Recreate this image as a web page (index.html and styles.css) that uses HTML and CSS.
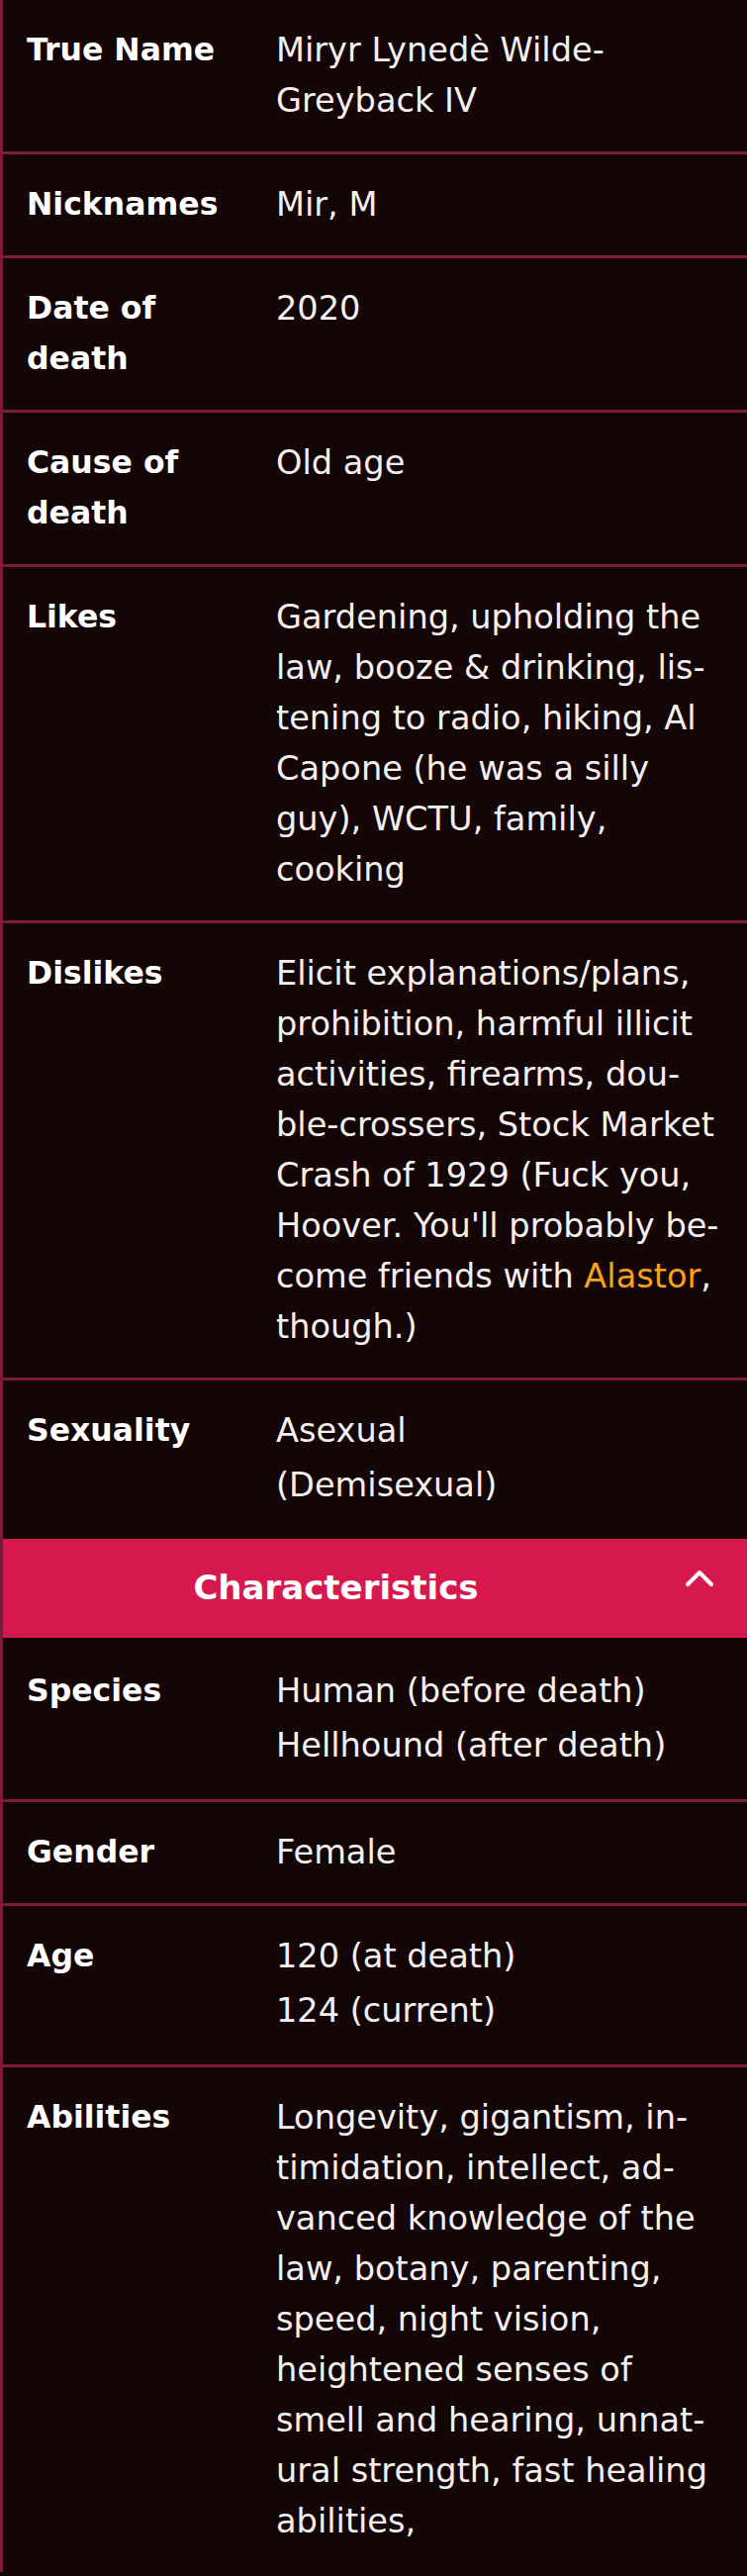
FILE: index.html
```html
<!DOCTYPE html>
<html lang="en">
<head>
<meta charset="utf-8">
<title>Miryr Lynedè Wilde-Greyback IV</title>
<link rel="stylesheet" href="styles.css">
</head>
<body>
<aside class="infobox">
  <section class="group">
    <div class="row first">
      <h3 class="label">True Name</h3>
      <div class="value">Miryr Lynedè Wilde-Greyback IV</div>
    </div>
    <div class="row">
      <h3 class="label">Nicknames</h3>
      <div class="value">Mir, M</div>
    </div>
    <div class="row">
      <h3 class="label">Date of death</h3>
      <div class="value">2020</div>
    </div>
    <div class="row">
      <h3 class="label">Cause of death</h3>
      <div class="value">Old age</div>
    </div>
    <div class="row">
      <h3 class="label">Likes</h3>
      <div class="value">Gardening, upholding the law, booze &amp; drinking, lis&shy;tening to radio, hiking, Al Capone (he was a silly guy), WCTU, family, cooking</div>
    </div>
    <div class="row">
      <h3 class="label">Dislikes</h3>
      <div class="value">Elicit explanations/plans, prohibition, harmful illicit activities, firearms, dou&shy;ble-crossers, Stock Market Crash of 1929 (Fuck you, Hoover. You'll probably be&shy;come friends with <a class="link" href="#">Alastor</a>, though.)</div>
    </div>
    <div class="row">
      <h3 class="label">Sexuality</h3>
      <div class="value list"><div class="item">Asexual</div><div class="item">(Demisexual)</div></div>
    </div>
  </section>
  <section class="group">
    <h2 class="group-header">Characteristics
      <svg class="chevron" width="30" height="20" viewBox="0 0 30 20" aria-hidden="true"><polyline points="3,17 15,5 27,17" fill="none" stroke="#fff" stroke-width="4" stroke-linecap="round" stroke-linejoin="round"/></svg>
    </h2>
    <div class="row first">
      <h3 class="label">Species</h3>
      <div class="value list"><div class="item">Human (before death)</div><div class="item">Hellhound (after death)</div></div>
    </div>
    <div class="row">
      <h3 class="label">Gender</h3>
      <div class="value">Female</div>
    </div>
    <div class="row">
      <h3 class="label">Age</h3>
      <div class="value list"><div class="item">120 (at death)</div><div class="item">124 (current)</div></div>
    </div>
    <div class="row">
      <h3 class="label">Abilities</h3>
      <div class="value">Longevity, gigantism, in&shy;timidation, intellect, ad&shy;vanced knowledge of the law, botany, parenting, speed, night vision, heightened senses of smell and hearing, unnat&shy;ural strength, fast healing abilities,</div>
    </div>
  </section>
</aside>
</body>
</html>
```
FILE: styles.css
```css
html, body {
  margin: 0;
  padding: 0;
  background: #140506;
}
body {
  font-family: "DejaVu Sans", "Liberation Sans", sans-serif;
  color: #f4f0f0;
}
.infobox {
  border-left: 3px solid #7c1a3c;
  display: flex;
  flex-direction: column;
}
.group {
  display: flex;
  flex-direction: column;
}
.row {
  display: grid;
  grid-template-columns: 252px 1fr;
  padding: 25px 22px 26px 24px;
  border-top: 3px solid #7c1a3c;
}
.row.first {
  border-top: none;
}
.group-header + .row {
  padding-top: 28px;
}
.label {
  margin: 0;
  font-size: 31.5px;
  font-weight: 700;
  line-height: 51px;
  color: #ffffff;
  padding-right: 10px;
}
.value {
  font-size: 33.6px;
  line-height: 51px;
  color: #f4f0f0;
  hyphens: manual;
}
.value.list {
  padding-bottom: 3px;
}
.item + .item {
  margin-top: 4px;
}
.link {
  color: #f5a21f;
  text-decoration: none;
}
.group-header {
  position: relative;
  margin: 0;
  background: #d6184e;
  color: #ffffff;
  font-size: 34px;
  font-weight: 700;
  line-height: 51px;
  text-align: center;
  padding: 24px 79px 25px 0;
}
.chevron {
  position: absolute;
  right: 33px;
  top: 29px;
}
```
